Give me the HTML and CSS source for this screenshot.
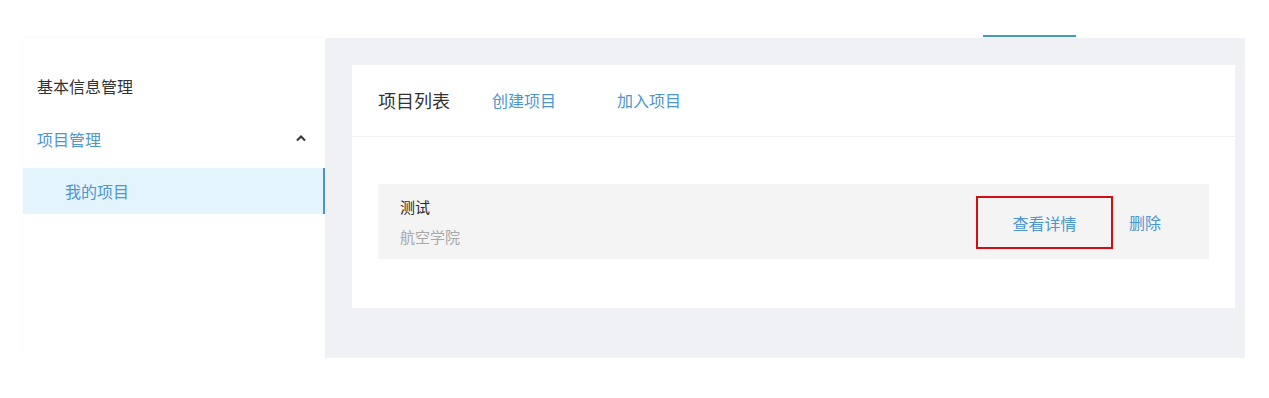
FILE: index.html
```html
<!DOCTYPE html>
<html lang="zh-CN">
<head>
<meta charset="utf-8">
<title>项目管理</title>
<link rel="stylesheet" href="styles.css">
</head>
<body>
<div class="topbar">
  <div class="tab-line"></div>
</div>
<div class="layout">
  <aside class="sidebar">
    <div class="menu-item">基本信息管理</div>
    <div class="menu-item active-group">
      <span>项目管理</span>
      <svg class="chev" width="12" height="8" viewBox="0 0 12 8"><polyline points="2,6.5 6,2.5 10,6.5" fill="none" stroke="#333" stroke-width="2"/></svg>
    </div>
    <div class="sub-item">我的项目</div>
  </aside>
  <main class="main">
    <section class="card">
      <div class="card-head">
        <span class="head-title">项目列表</span>
        <a class="head-link link-create">创建项目</a>
        <a class="head-link link-join">加入项目</a>
      </div>
      <div class="card-body">
        <div class="project">
          <div class="project-info">
            <div class="project-name">测试</div>
            <div class="project-org">航空学院</div>
          </div>
          <div class="project-actions">
            <a class="action detail">查看详情</a>
            <a class="action del">删除</a>
          </div>
        </div>
      </div>
    </section>
  </main>
</div>
</body>
</html>
```

FILE: styles.css
```css
* { box-sizing: border-box; }
html, body { margin: 0; padding: 0; background: #fff; }
body {
  font-family: "Noto Sans CJK SC", "Noto Sans", sans-serif;
  color: #333;
  width: 1269px;
  height: 398px;
  overflow: hidden;
}
.topbar {
  height: 38px;
  display: flex;
  align-items: flex-end;
  padding-left: 983px;
}
.tab-line {
  width: 93px;
  height: 2px;
  background: #3f9bc4;
  margin-bottom: 1px;
}
.layout {
  display: flex;
  padding-left: 23px;
}
.sidebar {
  width: 302px;
  padding-top: 21px;
  background: #fff;
  box-shadow: 0 -1px 2px rgba(0,0,0,0.04);
}
.menu-item {
  height: 53px;
  padding-left: 14px;
  padding-right: 18px;
  display: flex;
  align-items: center;
  justify-content: space-between;
  font-size: 16px;
  color: #333;
}
.active-group { color: #4d96cf; }
.chev { display: block; margin-top: -2px; }
.sub-item {
  margin-top: 3px;
  height: 46px;
  padding-left: 42px;
  display: flex;
  align-items: center;
  font-size: 16px;
  color: #4d96cf;
  background: #e4f4fc;
  border-right: 2px solid #4a92cc;
}
.main {
  width: 920px;
  height: 320px;
  background: #f0f1f4;
  padding: 27px 10px 0 27px;
}
.card {
  background: #fff;
  height: 243px;
}
.card-head {
  height: 72px;
  border-bottom: 1px solid #eef0f2;
  display: flex;
  align-items: center;
  padding-left: 26px;
  padding-bottom: 1px;
}
.head-title { font-size: 18px; color: #333; }
.head-link { font-size: 16px; color: #4d96cf; }
.link-create { margin-left: 42px; }
.link-join { margin-left: 61px; }
.card-body {
  padding: 47px 26px 0 26px;
}
.project {
  height: 75px;
  background: #f4f4f5;
  display: flex;
  align-items: center;
  justify-content: space-between;
  padding-left: 22px;
  padding-right: 48px;
}
.project-info { display: flex; flex-direction: column; gap: 8px; margin-top: 1px; }
.project-name { font-size: 15px; line-height: 22px; color: #2a2a2a; font-weight: 400; }
.project-org { font-size: 15px; line-height: 22px; color: #a8a8a8; }
.project-actions { display: flex; align-items: center; }
.action { font-size: 16px; color: #4d96cf; }
.detail {
  width: 137px;
  height: 53px;
  border: 2px solid #d40d12;
  display: flex;
  align-items: center;
  justify-content: center;
  margin-top: 2px;
}
.del { margin-left: 16px; }
```
